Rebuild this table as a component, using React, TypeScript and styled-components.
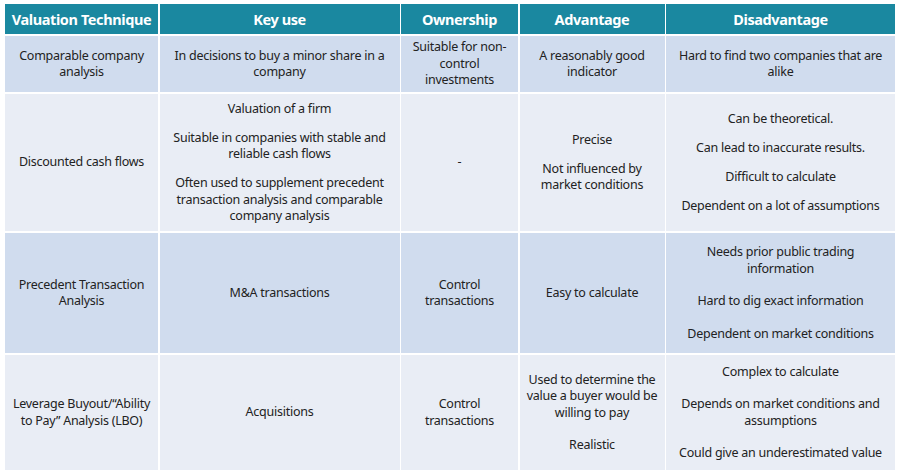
import { FunctionComponent } from "react";
import styled, { createGlobalStyle } from "styled-components";

const GlobalStyle = createGlobalStyle`
  body {
    margin: 0;
    background: #ffffff;
    font-family: "Noto Sans", "Open Sans", sans-serif;
  }
`;

const Page = styled.div`
  padding: 4px 7px 0 5px;
  width: 900px;
  height: 473px;
  box-sizing: border-box;
`;

const Table = styled.div`
  display: grid;
  grid-template-columns: 153px 240px 117px 145px 229px;
  grid-template-rows: 30px 56px 137px 120px 115px;
  gap: 2px 1.5px;
  background: #ffffff;
`;

const HeadCell = styled.div`
  background: #1a88a0;
  color: #ffffff;
  font-weight: 700;
  font-size: 14.5px;
  letter-spacing: -0.4px;
  display: flex;
  align-items: center;
  justify-content: center;
`;

const Cell = styled.div<{ $shade: boolean; $gap: number; $pad: number }>`
  background: ${(p) => (p.$shade ? "#d0dcee" : "#e9edf5")};
  color: #222222;
  font-size: 12.5px;
  line-height: 16.5px;
  letter-spacing: -0.25px;
  text-align: center;
  display: flex;
  flex-direction: column;
  justify-content: center;
  gap: ${(p) => p.$gap}px;
  padding: 0 ${(p) => p.$pad}px;
`;

const Para = styled.p`
  margin: 0;
`;

interface Row {
  cells: string[][];
  gap: number;
}

// side padding of each column, so the lines break where the slide's do
const colPad = [2, 8, 6, 3, 10];

const headers = ["Valuation Technique", "Key use", "Ownership", "Advantage", "Disadvantage"];

const rows: Row[] = [
  {
    gap: 12,
    cells: [
      ["Comparable company analysis"],
      ["In decisions to buy a minor share in a company"],
      ["Suitable for non-control investments"],
      ["A reasonably good indicator"],
      ["Hard to find two companies that are alike"],
    ],
  },
  {
    gap: 12.5,
    cells: [
      ["Discounted cash flows"],
      [
        "Valuation of a firm",
        "Suitable in companies with stable and reliable cash flows",
        "Often used to supplement precedent transaction analysis and comparable company analysis",
      ],
      ["-"],
      ["Precise", "Not influenced by market conditions"],
      [
        "Can be theoretical.",
        "Can lead to inaccurate results.",
        "Difficult to calculate",
        "Dependent on a lot of assumptions",
      ],
    ],
  },
  {
    gap: 16,
    cells: [
      ["Precedent Transaction Analysis"],
      ["M&A transactions"],
      ["Control transactions"],
      ["Easy to calculate"],
      ["Needs prior public trading information", "Hard to dig exact information", "Dependent on market conditions"],
    ],
  },
  {
    gap: 16,
    cells: [
      ["Leverage Buyout/\u201cAbility to Pay\u201d Analysis (LBO)"],
      ["Acquisitions"],
      ["Control transactions"],
      ["Used to determine the value a buyer would be willing to pay", "Realistic"],
      ["Complex to calculate", "Depends on market conditions and assumptions", "Could give an underestimated value"],
    ],
  },
];

const App: FunctionComponent = () => {
  return (
    <Page>
      <GlobalStyle />
      <Table>
        {headers.map((h) => (
          <HeadCell key={h}>{h}</HeadCell>
        ))}
        {rows.map((row, ri) =>
          row.cells.map((paras, ci) => (
            <Cell key={`${ri}-${ci}`} $shade={ri % 2 === 0} $gap={row.gap} $pad={colPad[ci]}>
              {paras.map((t) => (
                <Para key={t}>{t}</Para>
              ))}
            </Cell>
          ))
        )}
      </Table>
    </Page>
  );
};

export default App;
